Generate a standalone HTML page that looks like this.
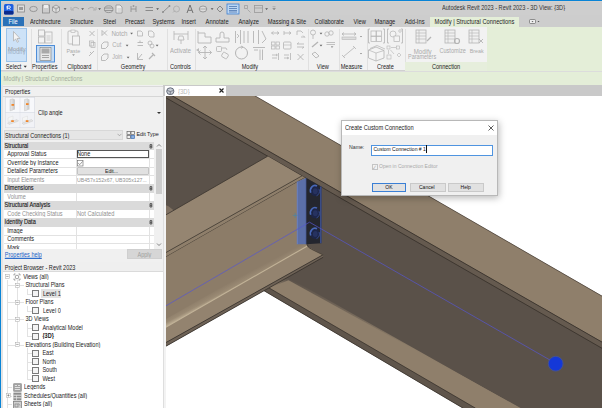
<!DOCTYPE html>
<html><head><meta charset="utf-8">
<style>
*{margin:0;padding:0;box-sizing:border-box}
html,body{width:602px;height:408px;overflow:hidden;background:#dcdcdc;font-family:"Liberation Sans",sans-serif;color:#222}
.a{position:absolute}
.t{position:absolute;white-space:nowrap;line-height:1}
#title{left:0;top:0;width:602px;height:15px;background:#cecece}
#tabs{left:0;top:15px;width:602px;height:12px;background:#cdcdcd}
.tab{position:absolute;top:16.4px;font-size:5.75px;color:#222;white-space:nowrap;line-height:9px}
#ribbon{left:0;top:27px;width:602px;height:44px;background:#f2f2f2;border-bottom:1px solid #d0d0d0}
.pl{position:absolute;top:61.6px;font-size:5.6px;color:#222;white-space:nowrap;line-height:8px}
.ic{position:absolute;font-size:6px;color:#aaa;white-space:nowrap;line-height:8px}
#ctx{left:0;top:72px;width:602px;height:13px;background:#e4eed8}
#left{left:0;top:85px;width:163px;height:323px;background:#f0f0f0}
#view{left:165.5px;top:95.8px;width:436.5px;height:312.2px;background:#fff;overflow:hidden}
.row{position:absolute;left:4px;width:149px;height:8.5px;font-size:6.2px;line-height:8.5px;white-space:nowrap}
.hdr{background:#dcdcdc;color:#222}
.prow{background:#fff}
.prow .k{position:absolute;left:3px;top:0}
.prow .v{position:absolute;left:72px;top:0;width:77px;height:8.5px;border-left:1px solid #ddd}
.t,.tab,.pl{transform:scaleY(1.15);transform-origin:0 0;margin-top:0.7px}
.tr{position:absolute;font-size:6.2px;line-height:8px;white-space:nowrap;color:#222}
</style></head><body>
<div class="a" id="title"></div>
<!-- quick access -->
<svg class="a" style="left:4px;top:4px" width="9.5" height="10.5"><rect x="0" y="0" width="9.5" height="10.5" rx="1.5" fill="#1d5fe0"/><rect x="0" y="7" width="9.5" height="3.5" rx="1" fill="#0b2a8c"/><path d="M3.2 2H5.3Q6.4 2 6.4 3.1Q6.4 4.2 5.3 4.2H3.2ZM3.2 2V5.8M5 4.2L6.4 5.8" stroke="#fff" stroke-width="0.85" fill="none"/></svg>
<div class="t" style="left:442px;top:4.3px;font-size:5.6px;color:#333">Autodesk Revit 2023 - Revit 2023 - 3D View: {3D}</div>

<div class="a" id="tabs"></div>
<div class="a" style="left:3px;top:17px;width:21px;height:9px;background:#2a71b8"></div>
<div class="a" style="left:430px;top:17px;width:89px;height:10px;background:#e4eed8"></div>

<div class="tab" style="left:8.5px;color:#fff">File</div>
<div class="tab" style="left:30px">Architecture</div>
<div class="tab" style="left:70px">Structure</div>
<div class="tab" style="left:103px">Steel</div>
<div class="tab" style="left:125px">Precast</div>
<div class="tab" style="left:152.5px">Systems</div>
<div class="tab" style="left:181.5px">Insert</div>
<div class="tab" style="left:205.6px">Annotate</div>
<div class="tab" style="left:238.5px">Analyze</div>
<div class="tab" style="left:267.8px">Massing &amp; Site</div>
<div class="tab" style="left:314.5px">Collaborate</div>
<div class="tab" style="left:353.5px">View</div>
<div class="tab" style="left:374.5px">Manage</div>
<div class="tab" style="left:404.7px">Add-Ins</div>
<div class="tab" style="left:434.6px">Modify | Structural Connections</div>
<div class="a" id="ribbon"></div>
<div class="a" style="left:487px;top:27px;width:115px;height:44px;background:#e4eed8"></div>
<div class="a" style="left:31px;top:29px;width:0.7px;height:41px;background:#e0e0e0"></div><div class="a" style="left:60.5px;top:29px;width:0.7px;height:41px;background:#e0e0e0"></div><div class="a" style="left:97px;top:29px;width:0.7px;height:41px;background:#e0e0e0"></div><div class="a" style="left:167.3px;top:29px;width:0.7px;height:41px;background:#e0e0e0"></div><div class="a" style="left:194.5px;top:29px;width:0.7px;height:41px;background:#e0e0e0"></div><div class="a" style="left:308.4px;top:29px;width:0.7px;height:41px;background:#e0e0e0"></div><div class="a" style="left:338.6px;top:29px;width:0.7px;height:41px;background:#e0e0e0"></div><div class="a" style="left:366.5px;top:29px;width:0.7px;height:41px;background:#e0e0e0"></div><div class="a" style="left:404.5px;top:29px;width:0.7px;height:41px;background:#e0e0e0"></div><div class="a" style="left:405px;top:62px;width:82px;height:9px;background:#e6eedc"></div>
<div class="a" style="left:6px;top:28px;width:21px;height:34px;background:#cde2f7;border:1px solid #9cc3ea"></div>
<div class="ic" style="left:8px;top:45px;color:#999">Modify</div>
<svg class="a" style="left:0;top:0" width="602" height="72"><rect x="17.5" y="5" width="7" height="7" fill="#ddd" stroke="#8a8a8a" stroke-width="0.8"/><rect x="19" y="7" width="4" height="3" fill="#999"/><ellipse cx="33.5" cy="9" rx="3.8" ry="2.6" fill="none" stroke="#8a8a8a" stroke-width="0.8"/><rect x="42.5" y="5" width="7" height="8" fill="#ccc" stroke="#8a8a8a" stroke-width="0.8"/><rect x="44" y="5" width="4" height="3" fill="#eee"/><path d="M52.5 7L56 5L59.5 7V11L56 13L52.5 11Z M52.5 7L56 9L59.5 7M56 9V13" fill="#ddd" stroke="#8a8a8a" stroke-width="0.7"/><path d="M63.7 8.2h2.8L65.1 10.0Z" fill="#555"/><path d="M72 9.5 Q75 5.5 79 9" fill="none" stroke="#aaa" stroke-width="1"/><path d="M71 7V10H74" fill="none" stroke="#aaa" stroke-width="0.8"/><path d="M81.2 8.2h2.8L82.6 10.0Z" fill="#555"/><path d="M95 9.5 Q92 5.5 88 9" fill="none" stroke="#aaa" stroke-width="1"/><path d="M96 7V10H93" fill="none" stroke="#aaa" stroke-width="0.8"/><path d="M98.2 8.2h2.8L99.6 10.0Z" fill="#555"/><path d="M104.5 8H113M104.5 10.5H113" stroke="#8a8a8a" stroke-width="0.8"/><ellipse cx="108.7" cy="9.2" rx="4.3" ry="3.4" fill="none" stroke="#8a8a8a" stroke-width="0.8"/><path d="M116 5H120L122 7V13H116Z" fill="#eee" stroke="#8a8a8a" stroke-width="0.7"/><path d="M117.5 9H121M117.5 11H121" stroke="#999" stroke-width="0.5"/><path d="M131 6V12M136 6V12M131 9H136" stroke="#8a8a8a" stroke-width="0.8"/><circle cx="133.5" cy="6" r="1" fill="#999"/><path d="M145.5 7.5H153M145.5 10.5H153" stroke="#8a8a8a" stroke-width="1.2"/><path d="M156.2 8.2h2.8L157.6 10.0Z" fill="#555"/><path d="M162.5 12.5L170 5.5" stroke="#8a8a8a" stroke-width="0.9"/><circle cx="163" cy="12" r="0.9" fill="#8a8a8a"/><circle cx="169.5" cy="6" r="0.9" fill="#8a8a8a"/><circle cx="176.5" cy="9" r="3" fill="none" stroke="#aaa" stroke-width="0.8"/><path d="M173 12.5L175 10.5" stroke="#aaa" stroke-width="0.8"/><path d="M187 13L190 5L193 13M188.2 10.3H191.8" fill="none" stroke="#666" stroke-width="0.9"/><ellipse cx="203" cy="9" rx="3.8" ry="3" fill="#ddd" stroke="#8a8a8a" stroke-width="0.8"/><path d="M199.5 9H206.5" stroke="#8a8a8a" stroke-width="0.6"/><path d="M210.7 8.2h2.8L212.1 10.0Z" fill="#555"/><path d="M220 6L223 9L220 12L217 9Z" fill="none" stroke="#777" stroke-width="0.8"/><rect x="227" y="4" width="12" height="10" fill="#bcd6f2" stroke="#3e7fd0" stroke-width="0.8"/><path d="M229 6.5H237M229 8.5H237M229 10.5H237M229 12H237" stroke="#3c68a8" stroke-width="0.7"/><path d="M244.5 5.5H247.5V8.5H244.5Z M247.5 9.5L250.5 12.5" fill="none" stroke="#999" stroke-width="0.7"/><rect x="254.5" y="5.5" width="8" height="7" fill="none" stroke="#999" stroke-width="0.8"/><path d="M254.5 8H262.5" stroke="#999" stroke-width="0.7"/><path d="M265.2 8.2h2.8L266.6 10.0Z" fill="#555"/><path d="M272.5 6.5h3M272.7 8.2h2.8L274.1 10.0Z" fill="#777" stroke="#999" stroke-width="0.5"/><rect x="529.5" y="19.5" width="6" height="4" rx="1" fill="#eee" stroke="#555" stroke-width="0.6"/><path d="M531.5 21.2h2L532.5 22.2Z" fill="#333"/><path d="M537.5 21h2L538.5 22Z" fill="#333"/><path d="M13.5 31.5V41L15.7 39L17.2 42.3L18.5 41.7L17 38.5H20Z" fill="#f4f4f4" stroke="#aaa" stroke-width="0.7"/><path d="M23.6 65.8h3.2L25.2 67.8Z" fill="#333"/><rect x="38.5" y="30" width="6" height="6" fill="#f3f3f3" stroke="#b4b4b4" stroke-width="0.8"/><rect x="38.5" y="37" width="6" height="6" fill="#f3f3f3" stroke="#b4b4b4" stroke-width="0.8"/><rect x="45" y="32" width="7" height="11" fill="#f3f3f3" stroke="#b4b4b4" stroke-width="0.8"/><path d="M46.5 36H50.5M46.5 38H50.5M46.5 40H50.5" stroke="#b4b4b4" stroke-width="0.6"/><rect x="36.5" y="45.5" width="18" height="16.5" fill="#c5dcf4" stroke="#3f84d6" stroke-width="0.9"/><rect x="40" y="47.5" width="11" height="13" fill="#e9e9e9" stroke="#7a7a7a" stroke-width="0.6"/><rect x="41.5" y="48.5" width="8" height="5" fill="#aaa"/><path d="M42 55.5H49M42 57.5H49" stroke="#777" stroke-width="0.6"/><rect x="68" y="31" width="10" height="13" rx="1" fill="#f3f3f3" stroke="#b4b4b4" stroke-width="0.8"/><rect x="71" y="30" width="4" height="2.5" fill="#f3f3f3" stroke="#b4b4b4" stroke-width="0.6"/><rect x="72.5" y="36" width="7" height="9" fill="#f3f3f3" stroke="#b4b4b4" stroke-width="0.8"/><path d="M72.1 54.2h2.8L73.5 56Z" fill="#999"/><path d="M89.5 31L94.5 36M94.5 31L89.5 36" stroke="#b4b4b4" stroke-width="0.9"/><rect x="89.5" y="41" width="4" height="5" fill="none" stroke="#b4b4b4" stroke-width="0.7"/><rect x="91" y="42.5" width="4" height="5" fill="none" stroke="#b4b4b4" stroke-width="0.7"/><path d="M89 56L94 51M90 52L92 54" stroke="#b4b4b4" stroke-width="0.9"/><path d="M102 30.5L107 35.5M107 30.5L102 35.5M102 30.5V35.5" stroke="#b4b4b4" stroke-width="0.9"/><path d="M101.5 44.5L104 42H108V46L105.5 48.5H101.5Z" fill="none" stroke="#b4b4b4" stroke-width="0.9"/><path d="M101.5 56.5L104 54H108V58L105.5 60.5H101.5Z" fill="none" stroke="#b4b4b4" stroke-width="0.9"/><path d="M130.2 32.7h2.8L131.6 34.5Z M125.7 44.7h2.8L127.1 46.5Z M126.7 56.7h2.8L128.1 58.5Z" fill="#666"/><path d="M137.5 31H141L142.5 32.5V36H137.5Z M148.5 31H152L154 33V37H150L148.5 35.5Z" fill="none" stroke="#b4b4b4" stroke-width="0.8"/><path d="M137.5 42.5H143M137.5 45.5H143M140 40.5V42.5" stroke="#b4b4b4" stroke-width="0.9"/><circle cx="150" cy="43" r="2" fill="none" stroke="#b4b4b4" stroke-width="0.8"/><circle cx="152" cy="46" r="2" fill="none" stroke="#b4b4b4" stroke-width="0.8"/><path d="M155.7 44.7h2.8L157.1 46.5Z" fill="#666"/><path d="M137.5 53V59.5H143M137.5 59.5L142 54" stroke="#b4b4b4" stroke-width="0.9" fill="none"/><path d="M149 59L153 55M152 53L155 56" stroke="#b4b4b4" stroke-width="1.2"/><path d="M174 31V40M188 31V40M174 34H188" stroke="#b4b4b4" stroke-width="0.8"/><path d="M179 36H183L184 40H178Z" fill="none" stroke="#b4b4b4" stroke-width="0.8"/><path d="M181 40V44" stroke="#b4b4b4" stroke-width="0.8"/><path d="M196 50L199 48V52Z" fill="#bbb"/><path d="M198 31V43M198 33H205V37H211V43H198" fill="none" stroke="#b4b4b4" stroke-width="0.9"/><path d="M216 42H229V38H224V34Q224 32 222 32Q220 32 220 34V38H216Z" fill="none" stroke="#b4b4b4" stroke-width="0.9"/><path d="M235.5 31V43M240.5 30V44M244 31V43M248 31V43" stroke="#b4b4b4" stroke-width="0.9"/><path d="M237 34L239 36L237 38" stroke="#b4b4b4" stroke-width="0.8" fill="none"/><path d="M253.5 31V43M258.5 30V44M262 31L266 39L262 43" stroke="#b4b4b4" stroke-width="0.9" fill="none"/><path d="M205 46V59M198.5 52.5H211.5M203 48L205 46L207 48M203 57L205 59L207 57M200.5 50.5L198.5 52.5L200.5 54.5M209.5 50.5L211.5 52.5L209.5 54.5" stroke="#b4b4b4" stroke-width="0.9" fill="none"/><rect x="216.5" y="46.5" width="5" height="5" rx="1" fill="none" stroke="#b4b4b4" stroke-width="0.8"/><rect x="222" y="53" width="6" height="5" rx="1" transform="rotate(30 225 55.5)" fill="none" stroke="#b4b4b4" stroke-width="0.8"/><path d="M222 48H226L227 50" stroke="#b4b4b4" stroke-width="0.8" fill="none"/><circle cx="241.5" cy="53" r="6" fill="none" stroke="#b4b4b4" stroke-width="1"/><path d="M241 46L243 47L241 48.5" stroke="#b4b4b4" stroke-width="0.8" fill="none"/><path d="M253 47.5H265M260 49.5V60M262.5 49.5V60M254 50H258" stroke="#b4b4b4" stroke-width="0.9" fill="none"/><path d="M271.5 33H279M271.5 33L273.5 31.5M271.5 33L273.5 34.5M279 33L277 31.5M279 33L277 34.5" stroke="#b4b4b4" stroke-width="0.8" fill="none"/><path d="M284 33H291M291 33L289 31.5M291 33L289 34.5M284 31V35" stroke="#b4b4b4" stroke-width="0.8" fill="none"/><path d="M297 31H301L303 33M297 31V35M303 35.5L305 37.5M301 37H305" stroke="#b4b4b4" stroke-width="0.8" fill="none"/><rect x="271.5" y="42" width="3.5" height="3" fill="none" stroke="#b4b4b4" stroke-width="0.7"/><rect x="276" y="42" width="3.5" height="3" fill="none" stroke="#b4b4b4" stroke-width="0.7"/><rect x="271.5" y="46" width="3.5" height="3" fill="none" stroke="#b4b4b4" stroke-width="0.7"/><rect x="276" y="46" width="3.5" height="3" fill="none" stroke="#b4b4b4" stroke-width="0.7"/><rect x="283.5" y="42" width="7.5" height="7" rx="1" fill="none" stroke="#b4b4b4" stroke-width="0.8"/><path d="M283.5 45H291" stroke="#b4b4b4" stroke-width="0.6"/><path d="M297 44H304M297 44L299 42.5M304 47H297M304 47L302 48.5" stroke="#b4b4b4" stroke-width="0.8" fill="none"/><path d="M272 55H277M272 58H277M278.5 53V60M276 54L277.5 55L276 56" stroke="#b4b4b4" stroke-width="0.8" fill="none"/><path d="M284 55H289M284 58H289M290.5 53V60M287 57L288.5 58L287 59" stroke="#b4b4b4" stroke-width="0.8" fill="none"/><path d="M297.5 54L303.5 60M303.5 54L297.5 60" stroke="#b4b4b4" stroke-width="0.9" fill="none"/><circle cx="313" cy="32.5" r="2.5" fill="none" stroke="#b4b4b4" stroke-width="0.8"/><path d="M313 35V39" stroke="#b4b4b4" stroke-width="0.8"/><path d="M319.6 32.7h2.8L321 34.5Z" fill="#666"/><circle cx="327" cy="34" r="2.2" fill="none" stroke="#b4b4b4" stroke-width="0.8"/><circle cx="331" cy="33" r="2.2" fill="none" stroke="#b4b4b4" stroke-width="0.8"/><path d="M312 47L318 42" stroke="#b4b4b4" stroke-width="1.3"/><path d="M319.6 44.7h2.8L321 46.5Z" fill="#666"/><path d="M326.5 42.5H335M326.5 44.5H335M331 46.5L333 46.5L332 47.5" stroke="#b4b4b4" stroke-width="0.8"/><path d="M312 54L315 52L319 56L316 58Z" fill="none" stroke="#b4b4b4" stroke-width="0.9"/><path d="M342 34H356M342 34L344 32.5M342 34L344 35.5M356 34L354 32.5M356 34L354 35.5" stroke="#b4b4b4" stroke-width="0.8" fill="none"/><rect x="342" y="37" width="14" height="2.5" fill="#ddd" stroke="#b4b4b4" stroke-width="0.6"/><path d="M360 36h2L361 37.2Z" fill="#777"/><path d="M343 57L355 47M342 55L345 58M353 46L356 49" stroke="#b4b4b4" stroke-width="0.8" fill="none"/><path d="M360 53h2L361 54.2Z" fill="#777"/><path d="M370 29H368.5V43H370M383 29H384.5V43H383" stroke="#b4b4b4" stroke-width="0.8" fill="none"/><rect x="371" y="31" width="5" height="5" fill="#f4f4f4" stroke="#b4b4b4" stroke-width="0.7"/><rect x="376.5" y="31" width="5" height="5" fill="#f4f4f4" stroke="#b4b4b4" stroke-width="0.7"/><rect x="371" y="36.5" width="5" height="5" fill="#f4f4f4" stroke="#b4b4b4" stroke-width="0.7"/><rect x="376.5" y="36.5" width="5" height="5" fill="#f4f4f4" stroke="#b4b4b4" stroke-width="0.7"/><path d="M389 29H387.5V43H389M401 29H402.5V43H401" stroke="#b4b4b4" stroke-width="0.8" fill="none"/><circle cx="393" cy="34" r="3" fill="#f4f4f4" stroke="#b4b4b4" stroke-width="0.7"/><rect x="394" y="36" width="5.5" height="5.5" fill="#f4f4f4" stroke="#b4b4b4" stroke-width="0.7"/><circle cx="400" cy="31" r="1.3" fill="none" stroke="#b4b4b4" stroke-width="0.6"/><path d="M368.5 50L376 47L384 50.5V58L376 61L368.5 58Z" fill="#f4f4f4" stroke="#b4b4b4" stroke-width="0.8"/><path d="M368.5 50L376 53L384 50.5M376 53V61M370 48.5L377 45.5L385 49" stroke="#b4b4b4" stroke-width="0.7" fill="none"/><rect x="387" y="46" width="3" height="3" fill="none" stroke="#b4b4b4" stroke-width="0.6"/><path d="M391 47.5H396" stroke="#b4b4b4" stroke-width="0.6"/><rect x="396.5" y="46" width="3" height="3" fill="none" stroke="#b4b4b4" stroke-width="0.6"/><path d="M388.5 50V54M390.5 50L394 54" stroke="#b4b4b4" stroke-width="0.6"/><rect x="387" y="55" width="4" height="4" fill="none" stroke="#b4b4b4" stroke-width="0.6"/><path d="M399 53L401 55L399 57L397 55Z" fill="none" stroke="#b4b4b4" stroke-width="0.6"/><rect x="416" y="30" width="10" height="13" fill="#f0f0f0" stroke="#b4b4b4" stroke-width="0.8"/><path d="M416 33H426M416 36H426M416 39H426M419 30V43" stroke="#b4b4b4" stroke-width="0.6"/><rect x="445" y="30" width="10" height="13" fill="#f0f0f0" stroke="#b4b4b4" stroke-width="0.8"/><path d="M445 33H455M445 36H455M445 39H455M448 30V43" stroke="#b4b4b4" stroke-width="0.6"/><rect x="469" y="30" width="10" height="13" fill="#f0f0f0" stroke="#b4b4b4" stroke-width="0.8"/><path d="M469 33H479M469 36H479M469 39H479M472 30V43" stroke="#b4b4b4" stroke-width="0.6"/><path d="M427 41L431 37" stroke="#b4b4b4" stroke-width="1.2"/><circle cx="457" cy="41" r="2.5" fill="none" stroke="#b4b4b4" stroke-width="1.2"/><path d="M479 39L483 43M483 39L479 43" stroke="#b4b4b4" stroke-width="0.9"/></svg>
<div class="t" style="left:7.5px;top:47px;font-size:6.1px;color:#9fb3c8">Modify</div>
<div class="t" style="left:66.4px;top:47px;font-size:5.4px;color:#aaa">Paste</div>
<div class="t" style="left:111.4px;top:29.5px;font-size:6.2px;color:#aaa">Notch</div>
<div class="t" style="left:112.3px;top:41.5px;font-size:5.8px;color:#aaa">Cut</div>
<div class="t" style="left:112.3px;top:53.5px;font-size:5.5px;color:#aaa">Join</div>
<div class="t" style="left:170px;top:47px;font-size:5.9px;color:#aaa">Activate</div>
<div class="t" style="left:413.7px;top:47px;font-size:6.1px;color:#aaa">Modify</div>
<div class="t" style="left:408px;top:53.2px;font-size:5.45px;color:#aaa">Parameters</div>
<div class="t" style="left:439.4px;top:47px;font-size:5.6px;color:#aaa">Customize</div>
<div class="t" style="left:469.8px;top:47px;font-size:5.3px;color:#aaa">Break</div>

<div class="pl" style="left:5.8px">Select</div>
<div class="pl" style="left:32px">Properties</div>
<div class="pl" style="left:67.3px">Clipboard</div>
<div class="pl" style="left:120.8px">Geometry</div>
<div class="pl" style="left:170px">Controls</div>
<div class="pl" style="left:241.7px">Modify</div>
<div class="pl" style="left:316.8px">View</div>
<div class="pl" style="left:340.7px">Measure</div>
<div class="pl" style="left:377px">Create</div>
<div class="pl" style="left:431.9px">Connection</div>
<div class="a" id="ctx"></div>
<div class="t" style="left:3.5px;top:75.6px;font-size:5.7px;color:#a3ab9b">Modify | Structural Connections</div>

<div class="a" id="left"></div>
<div class="a" style="left:1px;top:85px;width:2px;height:323px;background:#e4e4e4"></div>
<div class="a" style="left:3px;top:85.5px;width:160px;height:176px;background:#f0f0f0;border-top:1px solid #dadada"></div>
<div class="t" style="left:5px;top:88px;font-size:5.55px;color:#222">Properties</div>
<div class="a" style="left:3px;top:96px;width:160px;height:0.6px;background:#d6d6d6"></div>
<svg class="a" style="left:5px;top:97px" width="30" height="31">
<rect x="0.25" y="0.25" width="29.5" height="30.5" fill="#eef0f5" stroke="#d5d8e0" stroke-width="0.5"/>
<path d="M15 0V31M0 15.5H30" stroke="#d5d8e0" stroke-width="0.5"/>
<rect x="1" y="1" width="13.5" height="14" fill="#f7f8fb"/><rect x="15.5" y="1" width="13.5" height="14" fill="#f7f8fb"/>
<rect x="1" y="16" width="13.5" height="14" fill="#f1f2f6"/><rect x="15.5" y="16" width="13.5" height="14" fill="#f1f2f6"/>
<path d="M5 2.5L8 1.8V13L5 13.8Z" fill="#e2e2e2" stroke="#bdbdbd" stroke-width="0.4"/><path d="M8 1.8L10 2.6V12.5L8 13Z" fill="#cfcfcf"/>
<path d="M19.5 2.5L22.5 1.8V13L19.5 13.8Z" fill="#e2e2e2" stroke="#bdbdbd" stroke-width="0.4"/><path d="M22.5 1.8L24.5 2.6V12.5L22.5 13Z" fill="#cfcfcf"/>
<rect x="6.5" y="7" width="2.6" height="1.8" fill="#f0852a"/><rect x="21" y="6.2" width="2.6" height="1.8" fill="#f0852a"/>
<path d="M2.5 26L12 22.5L13.5 24L4 27.5Z" fill="#e4e4e4" stroke="#c4c4c4" stroke-width="0.4"/><path d="M3 24.5L8 22.7V19L3 20.8Z" fill="#f5f5f5" stroke="#d0d0d0" stroke-width="0.3"/>
<path d="M17 26L26.5 22.5L28 24L18.5 27.5Z" fill="#e4e4e4" stroke="#c4c4c4" stroke-width="0.4"/><path d="M17.5 24.5L22.5 22.7V19L17.5 20.8Z" fill="#f5f5f5" stroke="#d0d0d0" stroke-width="0.3"/>
<rect x="6.2" y="23.2" width="2.6" height="1.8" fill="#f0852a"/><rect x="20.8" y="23.2" width="2.6" height="1.8" fill="#f0852a"/>
</svg>
<div class="t" style="left:38px;top:109.2px;font-size:5.55px;color:#222">Clip angle</div>
<div class="a" style="left:157.4px;top:111.5px;width:0;height:0;border-left:2.2px solid transparent;border-right:2.2px solid transparent;border-top:2.6px solid #333"></div>
<div class="a" style="left:4px;top:130px;width:119px;height:9.5px;background:#e6e6e6;border:0.5px solid #d8d8d8"></div>
<div class="t" style="left:5px;top:132px;font-size:5.55px;color:#222">Structural Connections (1)</div>
<svg class="a" style="left:117px;top:133px" width="5" height="4"><path d="M0.5 0.8L2.5 2.8L4.5 0.8" stroke="#888" stroke-width="0.6" fill="none"/></svg>
<svg class="a" style="left:126px;top:130px" width="10" height="10"><rect x="1" y="1.5" width="3.5" height="3" fill="none" stroke="#666" stroke-width="0.7"/><rect x="5" y="1.5" width="3.5" height="3" fill="none" stroke="#666" stroke-width="0.7"/><rect x="1" y="5.5" width="3.5" height="3" fill="none" stroke="#666" stroke-width="0.7"/><rect x="5" y="5.5" width="3.5" height="3" fill="#8fb3e0" stroke="#3d6db5" stroke-width="0.7"/></svg>
<div class="t" style="left:136.4px;top:130.8px;font-size:5.4px;color:#222">Edit Type</div>
<div class="a" style="left:4px;top:141.5px;width:150px;height:107px;background:#fff;overflow:hidden">
<div class="a" style="left:0;top:0.00px;width:150px;height:8.5px;background:#dadada"></div>
<div class="t" style="left:0.6px;top:0.80px;font-size:5.55px;color:#1a1a1a;-webkit-text-stroke:0.12px #1a1a1a">Structural</div>
<svg class="a" style="left:145.3px;top:2.00px" width="4" height="5"><path d="M1 0.6H2.8M1 2.3H2.8M1 4H2.8M1 0.6V4M2.8 0.6V4" stroke="#333" stroke-width="0.75" fill="none"/></svg>
<div class="a" style="left:0;top:16.50px;width:150px;height:0.8px;background:#e2e2e2"></div>
<div class="a" style="left:71.5px;top:8.50px;width:0.7px;height:8.5px;background:#e2e2e2"></div>
<div class="a" style="left:144.5px;top:8.50px;width:0.7px;height:8.5px;background:#e2e2e2"></div>
<div class="t" style="left:3.3px;top:9.10px;font-size:5.55px;color:#222">Approval Status</div>
<div class="a" style="left:72.5px;top:8.70px;width:72px;height:8px;background:#fff;border:0.8px solid #555"></div>
<div class="t" style="left:73px;top:9.10px;font-size:5.55px;color:#222">None</div>
<div class="a" style="left:0;top:25.00px;width:150px;height:0.8px;background:#e2e2e2"></div>
<div class="a" style="left:71.5px;top:17.00px;width:0.7px;height:8.5px;background:#e2e2e2"></div>
<div class="a" style="left:144.5px;top:17.00px;width:0.7px;height:8.5px;background:#e2e2e2"></div>
<div class="t" style="left:3.3px;top:17.60px;font-size:5.55px;color:#222">Override by Instance</div>
<svg class="a" style="left:73px;top:18.00px" width="7" height="7"><rect x="0.5" y="0.5" width="5.5" height="5.5" fill="#fff" stroke="#666" stroke-width="0.6"/><path d="M1.2 3.2L2.8 4.6L5.5 1.5" stroke="#555" stroke-width="0.6" fill="none"/></svg>
<div class="a" style="left:0;top:33.50px;width:150px;height:0.8px;background:#e2e2e2"></div>
<div class="a" style="left:71.5px;top:25.50px;width:0.7px;height:8.5px;background:#e2e2e2"></div>
<div class="a" style="left:144.5px;top:25.50px;width:0.7px;height:8.5px;background:#e2e2e2"></div>
<div class="t" style="left:3.3px;top:26.10px;font-size:5.55px;color:#222">Detailed Parameters</div>
<div class="a" style="left:72.5px;top:25.90px;width:72px;height:7.5px;background:#e1e1e1;border:0.6px solid #c4c4c4;border-radius:1px"></div>
<div class="t" style="left:101px;top:26.10px;font-size:5.1px;color:#222">Edit...</div>
<div class="a" style="left:0;top:42.00px;width:150px;height:0.8px;background:#e2e2e2"></div>
<div class="a" style="left:71.5px;top:34.00px;width:0.7px;height:8.5px;background:#e2e2e2"></div>
<div class="a" style="left:144.5px;top:34.00px;width:0.7px;height:8.5px;background:#e2e2e2"></div>
<div class="t" style="left:3.3px;top:34.60px;font-size:5.55px;color:#8f8f8f">Input Elements</div>
<div class="t" style="left:73px;top:34.60px;font-size:5.2px;color:#8f8f8f">UB457x152x67, UB305x127...</div>
<div class="a" style="left:0;top:42.50px;width:150px;height:8.5px;background:#dadada"></div>
<div class="t" style="left:0.6px;top:43.30px;font-size:5.55px;color:#1a1a1a;-webkit-text-stroke:0.12px #1a1a1a">Dimensions</div>
<svg class="a" style="left:145.3px;top:44.50px" width="4" height="5"><path d="M1 0.6H2.8M1 2.3H2.8M1 4H2.8M1 0.6V4M2.8 0.6V4" stroke="#333" stroke-width="0.75" fill="none"/></svg>
<div class="a" style="left:0;top:59.00px;width:150px;height:0.8px;background:#e2e2e2"></div>
<div class="a" style="left:71.5px;top:51.00px;width:0.7px;height:8.5px;background:#e2e2e2"></div>
<div class="a" style="left:144.5px;top:51.00px;width:0.7px;height:8.5px;background:#e2e2e2"></div>
<div class="t" style="left:3.3px;top:51.60px;font-size:5.55px;color:#8f8f8f">Volume</div>
<div class="a" style="left:0;top:59.50px;width:150px;height:8.5px;background:#dadada"></div>
<div class="t" style="left:0.6px;top:60.30px;font-size:5.55px;color:#1a1a1a;-webkit-text-stroke:0.12px #1a1a1a">Structural Analysis</div>
<svg class="a" style="left:145.3px;top:61.50px" width="4" height="5"><path d="M1 0.6H2.8M1 2.3H2.8M1 4H2.8M1 0.6V4M2.8 0.6V4" stroke="#333" stroke-width="0.75" fill="none"/></svg>
<div class="a" style="left:0;top:76.00px;width:150px;height:0.8px;background:#e2e2e2"></div>
<div class="a" style="left:71.5px;top:68.00px;width:0.7px;height:8.5px;background:#e2e2e2"></div>
<div class="a" style="left:144.5px;top:68.00px;width:0.7px;height:8.5px;background:#e2e2e2"></div>
<div class="t" style="left:3.3px;top:68.60px;font-size:5.55px;color:#8f8f8f">Code Checking Status</div>
<div class="t" style="left:73px;top:68.60px;font-size:5.7px;color:#8f8f8f">Not Calculated</div>
<div class="a" style="left:0;top:76.50px;width:150px;height:8.5px;background:#dadada"></div>
<div class="t" style="left:0.6px;top:77.30px;font-size:5.55px;color:#1a1a1a;-webkit-text-stroke:0.12px #1a1a1a">Identity Data</div>
<svg class="a" style="left:145.3px;top:78.50px" width="4" height="5"><path d="M1 0.6H2.8M1 2.3H2.8M1 4H2.8M1 0.6V4M2.8 0.6V4" stroke="#333" stroke-width="0.75" fill="none"/></svg>
<div class="a" style="left:0;top:93.00px;width:150px;height:0.8px;background:#e2e2e2"></div>
<div class="a" style="left:71.5px;top:85.00px;width:0.7px;height:8.5px;background:#e2e2e2"></div>
<div class="a" style="left:144.5px;top:85.00px;width:0.7px;height:8.5px;background:#e2e2e2"></div>
<div class="t" style="left:3.3px;top:85.60px;font-size:5.55px;color:#222">Image</div>
<div class="a" style="left:0;top:101.50px;width:150px;height:0.8px;background:#e2e2e2"></div>
<div class="a" style="left:71.5px;top:93.50px;width:0.7px;height:8.5px;background:#e2e2e2"></div>
<div class="a" style="left:144.5px;top:93.50px;width:0.7px;height:8.5px;background:#e2e2e2"></div>
<div class="t" style="left:3.3px;top:94.10px;font-size:5.55px;color:#222">Comments</div>
<div class="a" style="left:0;top:110.00px;width:150px;height:0.8px;background:#e2e2e2"></div>
<div class="a" style="left:71.5px;top:102.00px;width:0.7px;height:8.5px;background:#e2e2e2"></div>
<div class="a" style="left:144.5px;top:102.00px;width:0.7px;height:8.5px;background:#e2e2e2"></div>
<div class="t" style="left:3.3px;top:102.60px;font-size:5.55px;color:#222">Mark</div>
</div>
<div class="a" style="left:154px;top:141.5px;width:8.5px;height:107px;background:#f0f0f0"></div>
<div class="a" style="left:155.5px;top:149px;width:6px;height:45px;background:#cdcdcd"></div>
<svg class="a" style="left:155.5px;top:143px" width="6" height="5"><path d="M1 3.5L3 1.5L5 3.5" stroke="#555" stroke-width="0.7" fill="none"/></svg>
<svg class="a" style="left:155.5px;top:242px" width="6" height="5"><path d="M1 1.5L3 3.5L5 1.5" stroke="#555" stroke-width="0.7" fill="none"/></svg>
<div class="t" style="left:4.8px;top:251.2px;font-size:5.5px;color:#1a5fc7;text-decoration:underline">Properties help</div>
<div class="a" style="left:127px;top:249px;width:34.5px;height:10px;background:#d6d6d6;border:0.5px solid #cfcfcf"></div>
<div class="t" style="left:137.5px;top:251.5px;font-size:5.55px;color:#a0a0a0">Apply</div>
<div class="a" style="left:3px;top:261.5px;width:160px;height:146.5px;background:#fff;border-top:0.6px solid #cfcfcf"></div>
<div class="a" style="left:3px;top:262.2px;width:160px;height:10px;background:#efefef;border-bottom:0.5px solid #dadada"></div>
<div class="t" style="left:4.8px;top:264.8px;font-size:5.55px;color:#222">Project Browser - Revit 2023</div>
<div class="a" style="left:7px;top:280px;width:0;height:128px;border-left:0.6px solid #e2e2e2"></div>
<div class="a" style="left:16.8px;top:280px;width:0;height:66px;border-left:0.6px solid #e2e2e2"></div>
<div class="a" style="left:7px;top:285px;width:8px;height:0;border-top:0.6px solid #e2e2e2"></div>
<div class="a" style="left:19px;top:285px;width:5px;height:0;border-top:0.6px solid #e2e2e2"></div>
<div class="a" style="left:7px;top:302px;width:8px;height:0;border-top:0.6px solid #e2e2e2"></div>
<div class="a" style="left:19px;top:302px;width:5px;height:0;border-top:0.6px solid #e2e2e2"></div>
<div class="a" style="left:7px;top:319px;width:8px;height:0;border-top:0.6px solid #e2e2e2"></div>
<div class="a" style="left:19px;top:319px;width:5px;height:0;border-top:0.6px solid #e2e2e2"></div>
<div class="a" style="left:7px;top:344.5px;width:8px;height:0;border-top:0.6px solid #e2e2e2"></div>
<div class="a" style="left:19px;top:344.5px;width:5px;height:0;border-top:0.6px solid #e2e2e2"></div>
<div class="a" style="left:26.5px;top:289px;width:0;height:4.5px;border-left:0.6px solid #e2e2e2"></div>
<div class="a" style="left:26.5px;top:306px;width:0;height:4.5px;border-left:0.6px solid #e2e2e2"></div>
<div class="a" style="left:26.5px;top:323px;width:0;height:13px;border-left:0.6px solid #e2e2e2"></div>
<div class="a" style="left:26.5px;top:348px;width:0;height:30.5px;border-left:0.6px solid #e2e2e2"></div>
<div class="a" style="left:26.5px;top:293.5px;width:5px;height:0;border-top:0.6px solid #e2e2e2"></div>
<div class="a" style="left:26.5px;top:310.5px;width:5px;height:0;border-top:0.6px solid #e2e2e2"></div>
<div class="a" style="left:26.5px;top:327.5px;width:5px;height:0;border-top:0.6px solid #e2e2e2"></div>
<div class="a" style="left:26.5px;top:336px;width:5px;height:0;border-top:0.6px solid #e2e2e2"></div>
<div class="a" style="left:26.5px;top:353px;width:5px;height:0;border-top:0.6px solid #e2e2e2"></div>
<div class="a" style="left:26.5px;top:361.5px;width:5px;height:0;border-top:0.6px solid #e2e2e2"></div>
<div class="a" style="left:26.5px;top:370px;width:5px;height:0;border-top:0.6px solid #e2e2e2"></div>
<div class="a" style="left:26.5px;top:378.5px;width:5px;height:0;border-top:0.6px solid #e2e2e2"></div>
<div class="a" style="left:7px;top:387px;width:5px;height:0;border-top:0.6px solid #e2e2e2"></div>
<div class="a" style="left:7px;top:395.5px;width:5px;height:0;border-top:0.6px solid #e2e2e2"></div>
<div class="a" style="left:7px;top:404px;width:5px;height:0;border-top:0.6px solid #e2e2e2"></div>
<svg class="a" style="left:5.2px;top:274.2px" width="5" height="5"><rect x="0.3" y="0.3" width="4.2" height="4.2" fill="#fff" stroke="#a8a8a8" stroke-width="0.5"/><path d="M1.2 2.4H3.6" stroke="#555" stroke-width="0.5"/></svg>
<svg class="a" style="left:12.9px;top:272.7px" width="8" height="8"><path d="M1 1h1.5M5.5 1H7V2.5M7 5.5V7H5.5M2.5 7H1V5.5M1 2.5V1" stroke="#666" stroke-width="0.6" fill="none"/><circle cx="4" cy="4" r="1.8" fill="none" stroke="#666" stroke-width="0.6"/></svg>
<div class="t" style="left:23.2px;top:272.9px;font-size:5.55px;color:#222">Views (all)</div>
<svg class="a" style="left:14.6px;top:282.7px" width="5" height="5"><rect x="0.3" y="0.3" width="4.2" height="4.2" fill="#fff" stroke="#a8a8a8" stroke-width="0.5"/><path d="M1.2 2.4H3.6" stroke="#555" stroke-width="0.5"/></svg>
<div class="t" style="left:25.4px;top:281.4px;font-size:5.55px;color:#222">Structural Plans</div>
<div class="a" style="left:41.2px;top:289.3px;width:20px;height:8.4px;background:#e3e3e3"></div>
<div class="a" style="left:31.8px;top:290.1px;width:7px;height:7px;border:0.7px solid #7a7a7a;background:#f4f4f4"></div>
<div class="t" style="left:42.9px;top:289.9px;font-size:5.55px;color:#222">Level 1</div>
<svg class="a" style="left:14.6px;top:299.7px" width="5" height="5"><rect x="0.3" y="0.3" width="4.2" height="4.2" fill="#fff" stroke="#a8a8a8" stroke-width="0.5"/><path d="M1.2 2.4H3.6" stroke="#555" stroke-width="0.5"/></svg>
<div class="t" style="left:25.4px;top:298.4px;font-size:5.55px;color:#222">Floor Plans</div>
<div class="a" style="left:31.8px;top:307.1px;width:7px;height:7px;border:0.7px solid #7a7a7a;background:#f4f4f4"></div>
<div class="t" style="left:42.9px;top:306.9px;font-size:5.55px;color:#222">Level 0</div>
<svg class="a" style="left:14.6px;top:316.7px" width="5" height="5"><rect x="0.3" y="0.3" width="4.2" height="4.2" fill="#fff" stroke="#a8a8a8" stroke-width="0.5"/><path d="M1.2 2.4H3.6" stroke="#555" stroke-width="0.5"/></svg>
<div class="t" style="left:25.4px;top:315.4px;font-size:5.55px;color:#222">3D Views</div>
<div class="a" style="left:31.8px;top:324.1px;width:7px;height:7px;border:0.7px solid #7a7a7a;background:#f4f4f4"></div>
<div class="t" style="left:42.4px;top:323.9px;font-size:5.55px;color:#222">Analytical Model</div>
<div class="a" style="left:31.8px;top:332.6px;width:7px;height:7px;border:0.7px solid #7a7a7a;background:#f4f4f4"></div>
<div class="t" style="left:42.4px;top:332.4px;font-size:5.55px;color:#222"><b>{3D}</b></div>
<svg class="a" style="left:14.6px;top:342.2px" width="5" height="5"><rect x="0.3" y="0.3" width="4.2" height="4.2" fill="#fff" stroke="#a8a8a8" stroke-width="0.5"/><path d="M1.2 2.4H3.6" stroke="#555" stroke-width="0.5"/></svg>
<div class="t" style="left:25.4px;top:340.9px;font-size:5.55px;color:#222">Elevations (Building Elevation)</div>
<div class="a" style="left:31.8px;top:349.6px;width:7px;height:7px;border:0.7px solid #7a7a7a;background:#f4f4f4"></div>
<div class="t" style="left:42.4px;top:349.4px;font-size:5.55px;color:#222">East</div>
<div class="a" style="left:31.8px;top:358.1px;width:7px;height:7px;border:0.7px solid #7a7a7a;background:#f4f4f4"></div>
<div class="t" style="left:42.4px;top:357.9px;font-size:5.55px;color:#222">North</div>
<div class="a" style="left:31.8px;top:366.6px;width:7px;height:7px;border:0.7px solid #7a7a7a;background:#f4f4f4"></div>
<div class="t" style="left:42.4px;top:366.4px;font-size:5.55px;color:#222">South</div>
<div class="a" style="left:31.8px;top:375.1px;width:7px;height:7px;border:0.7px solid #7a7a7a;background:#f4f4f4"></div>
<div class="t" style="left:42.4px;top:374.9px;font-size:5.55px;color:#222">West</div>
<svg class="a" style="left:12.5px;top:383px" width="9" height="9"><rect x="0.4" y="0.4" width="8.2" height="8.2" rx="1" fill="#a2a2a2" stroke="#8a8a8a" stroke-width="0.6"/><path d="M1.8 2.5H4M1.8 4.5H7M5 2.5H7M1.8 6.5H7" stroke="#e8e8e8" stroke-width="0.9"/></svg>
<div class="t" style="left:24.0px;top:383.4px;font-size:5.55px;color:#222">Legends</div>
<svg class="a" style="left:5.6px;top:393.2px" width="5" height="5"><rect x="0.3" y="0.3" width="4.2" height="4.2" fill="#fff" stroke="#a8a8a8" stroke-width="0.5"/><path d="M1.2 2.4H3.6" stroke="#555" stroke-width="0.5"/><path d="M2.4 1.2V3.6" stroke="#555" stroke-width="0.5"/></svg>
<svg class="a" style="left:12.5px;top:391.8px" width="9" height="9"><rect x="0.4" y="0.6" width="8" height="7.8" fill="#8c8c8c"/><path d="M0.4 3.2H8.4M0.4 5.8H8.4" stroke="#eee" stroke-width="0.9"/><path d="M3.5 3.2V8.4" stroke="#eee" stroke-width="0.6"/></svg>
<div class="t" style="left:24.0px;top:391.9px;font-size:5.55px;color:#222">Schedules/Quantities (all)</div>
<svg class="a" style="left:12.5px;top:400.5px" width="9" height="9"><rect x="0.5" y="0.5" width="8" height="7.5" fill="#d0d0d0" stroke="#808080" stroke-width="0.8"/><rect x="2" y="3" width="3" height="3" fill="none" stroke="#777" stroke-width="0.6"/><path d="M5.5 2.5L7 4.5" stroke="#777" stroke-width="0.6"/></svg>
<div class="t" style="left:24.0px;top:400.4px;font-size:5.55px;color:#222">Sheets (all)</div>
<div class="a" style="left:162.5px;top:85px;width:3px;height:323px;background:#f3f3f3;border-left:0.7px solid #dedede"></div>
<div class="a" style="left:163px;top:85px;width:439px;height:11px;background:#c9c9c9"></div>
<div class="a" style="left:164.6px;top:86.2px;width:61px;height:9.6px;background:#fff"></div>
<svg class="a" style="left:166px;top:87px" width="9" height="8"><ellipse cx="4.3" cy="4.2" rx="3.6" ry="3.4" fill="#c9ced6" stroke="#5a6270" stroke-width="0.9"/><path d="M1.2 3.5Q4.3 5.5 7.4 3.5M4.3 4.6V7.5" stroke="#5a6270" stroke-width="0.7" fill="none"/></svg><div class="t" style="left:178px;top:87.3px;font-size:6px;color:#b8b8b8">{3D}</div>
<svg class="a" style="left:218.8px;top:88.2px" width="5" height="5"><path d="M0.5 0.5L4.5 4.5M4.5 0.5L0.5 4.5" stroke="#222" stroke-width="1.15"/></svg>

<div class="a" id="view">
<svg width="436.5" height="312.2" viewBox="165.5 95.8 436.5 312.2">
<defs>
<linearGradient id="fil1" gradientUnits="userSpaceOnUse" x1="384" y1="322" x2="379" y2="333"><stop offset="0" stop-color="#5a5149"/><stop offset="1" stop-color="#8e7e6a"/></linearGradient>
<linearGradient id="fil2" gradientUnits="userSpaceOnUse" x1="236" y1="278.5" x2="240.5" y2="287"><stop offset="0" stop-color="#8c7c68"/><stop offset="0.6" stop-color="#9a8a74"/><stop offset="1" stop-color="#bfb096"/></linearGradient>
</defs>
<!--SCENE-->
<rect x="165" y="95" width="437" height="313" fill="#5a5149"/>
<polygon points="253.3,95.0 602.0,95.0 602.0,296.2" fill="#fff"/>
<polygon points="166.0,345.7 263.5,290.5 462.6,408.0 165.0,408.0 165.0,345.7" fill="#fff"/>
<polygon points="170.6,95.0 253.3,95.0 602.0,296.2 602.0,342.2" fill="#8f7f6b"/>
<polygon points="165.0,97.3 170.6,95.0 602.0,342.2 602.0,348.4" fill="#655a4f"/>
<polyline points="170.6,95.0 602.0,342.2" stroke="#3a332d" stroke-width="0.9" fill="none"/>
<polyline points="165.0,97.3 602.0,348.4" stroke="#3a332d" stroke-width="0.9" fill="none"/>
<polyline points="253.3,95.0 602.0,296.2" stroke="#4a4038" stroke-width="0.7" fill="none"/>
<polygon points="280.0,272.9 519.4,408.0 475.0,408.0 268.5,287.7" fill="url(#fil1)"/>
<polygon points="288.0,280.0 520.4,408.0 475.0,408.0 268.5,287.7" fill="#8f7f6b"/>
<polygon points="268.5,287.7 475.0,408.0 462.6,408.0 263.5,290.5" fill="#5f554b"/>
<polyline points="268.5,287.7 475.0,408.0" stroke="#3a332d" stroke-width="0.8" fill="none"/>
<polyline points="263.5,290.5 462.6,408.0" stroke="#3a332d" stroke-width="0.8" fill="none"/>
<polygon points="165,205 168,206 174,210.8 165,215.5" fill="#7f7061"/>
<polygon points="165.0,214.9 267.2,156.0 301.4,175.7 165.0,252.6" fill="#958571"/>
<polyline points="165.0,214.9 267.2,156.0" stroke="#3a332d" stroke-width="0.8" fill="none"/>
<polygon points="165.0,252.6 301.4,175.7 304.7,177.2 165.0,257.0" fill="#8f7f6b"/>
<polyline points="165.0,252.6 301.4,175.7" stroke="#3a332d" stroke-width="0.7" fill="none"/>
<polyline points="165.0,257.0 304.7,177.2" stroke="#3a332d" stroke-width="0.7" fill="none"/>
<polygon points="165.0,257.0 304.7,177.2 306.5,246.0 165.0,327.2" fill="#8c7c68"/>
<polygon points="165.0,319.2 306.5,238.0 306.5,247.0 165.0,328.2" fill="url(#fil2)"/>
<polygon points="165.0,327.2 306.5,246.0 322.6,254.5 165.0,342.6" fill="#93836f"/>
<polyline points="165.0,327.2 306.5,246.0" stroke="#c2b398" stroke-width="1.1" fill="none"/>
<polygon points="165.0,342.6 322.6,254.5 322.6,257.1 165.0,346.3" fill="#6e6256"/>
<polyline points="165.0,342.6 322.6,254.5" stroke="#2e2925" stroke-width="0.7" fill="none"/>
<polyline points="165.0,346.3 322.6,257.1" stroke="#2e2925" stroke-width="0.7" fill="none"/>
<path d="M306.6,238 L306.6,244.5 Q307.5,247.6 311,249 L322.3,254.6 L322.6,255.0 L306.5,247.0 Z" fill="#93836f"/>
<path d="M306.6,238 L306.6,244.5 Q307.5,247.6 311,249 L322.3,254.6" stroke="#3a332d" stroke-width="0.8" fill="none"/>
<!-- plate -->
<polygon points="296.4,181.5 305.6,177.7 305.6,244 296.4,244" fill="#5b6fa8"/>
<polyline points="296.8,181.5 296.8,244" stroke="#7086c4" stroke-width="0.8"/>
<polygon points="305.6,177.7 321,186.5 321,243 305.6,244" fill="#24262e"/>
<polyline points="320.3,186.2 320.3,243" stroke="#3d4f8c" stroke-width="1.5"/>
<polyline points="305.6,177.7 305.6,244" stroke="#3c4f8e" stroke-width="0.6"/>
<g id="bolt">
<ellipse cx="314.4" cy="190.6" rx="4.6" ry="5.3" fill="#1d2547"/>
<path d="M310.2,192.5 A4.6,5.3 0 0 1 316.5,185.8" stroke="#4868b8" stroke-width="1.6" fill="none"/>
<path d="M318.6,189 A4.6,5.3 0 0 1 316,195.6" stroke="#33488a" stroke-width="1" fill="none"/>
<ellipse cx="314.8" cy="191" rx="2.4" ry="3" fill="#263260"/>
</g>
<use href="#bolt" y="22.1"/>
<use href="#bolt" y="42.8"/>
<path d="M292.3,215.2H297.1M294.7,212.8V217.6" stroke="#3f86b0" stroke-width="0.6"/>
<!-- analytical lines -->
<polyline points="165,305.9 309,222 555,363" stroke="#5656d0" stroke-width="0.7" fill="none"/>
<circle cx="555.2" cy="363.5" r="7" fill="#1438d8"/>
<circle cx="555.2" cy="363.5" r="7.4" fill="none" stroke="#3552c8" stroke-width="1" opacity="0.55"/>
</svg>
</div>

<!-- dialog -->
<div class="a" style="left:341px;top:120px;width:157px;height:75.5px;background:#f0f0f0;border:0.8px solid #b8b8b8;box-shadow:1px 2px 7px rgba(0,0,0,0.28)"></div>
<div class="a" style="left:342px;top:121px;width:155px;height:13.5px;background:#fff"></div>
<div class="t" style="left:345px;top:124.5px;font-size:5.7px;color:#222">Create Custom Connection</div>
<svg class="a" style="left:488px;top:125px" width="6" height="6"><path d="M0.5 0.5L5.5 5.5M5.5 0.5L0.5 5.5" stroke="#333" stroke-width="0.8"/></svg>
<div class="t" style="left:349px;top:143.5px;font-size:5.2px;color:#333">Name:</div>
<div class="a" style="left:370.5px;top:144.5px;width:122px;height:11px;background:#fff;border:1px solid #4f94e0"></div>
<div class="t" style="left:373.5px;top:144.3px;font-size:5.0px;color:#111">Custom Connection # 1<span style="display:inline-block;width:0.8px;height:6.5px;background:#111;vertical-align:-1px;margin-left:0.3px"></span></div>
<div class="a" style="left:371.5px;top:164px;width:6px;height:6px;border:1px solid #c4c4c4;background:#f3f3f3"></div>
<div class="t" style="left:372px;top:163px;font-size:6px;color:#bbb">✓</div>
<div class="t" style="left:379px;top:162.3px;font-size:5.0px;color:#a8a8a8">Open in Connection Editor</div>
<div class="a" style="left:371.5px;top:182.5px;width:34.5px;height:9.5px;background:#e1e1e1;border:1px solid #3a7fd5"></div>
<div class="t" style="left:385.3px;top:183.2px;font-size:5.0px;color:#111">OK</div>
<div class="a" style="left:410px;top:182.5px;width:35.5px;height:9.5px;background:#e1e1e1;border:1px solid #c9c9c9"></div>
<div class="t" style="left:419px;top:183.2px;font-size:5.0px;color:#111">Cancel</div>
<div class="a" style="left:448px;top:182.5px;width:35.5px;height:9.5px;background:#e1e1e1;border:1px solid #c9c9c9"></div>
<div class="t" style="left:460.6px;top:183.2px;font-size:5.0px;color:#111">Help</div>
<div class="a" style="left:0;top:0;width:602px;height:1px;background:#0a84d6"></div><div class="a" style="left:0;top:1px;width:602px;height:1px;background:#d6d2ce"></div>
<div class="a" style="left:0;top:0;width:1px;height:408px;background:#0a84d6"></div>
</body></html>
